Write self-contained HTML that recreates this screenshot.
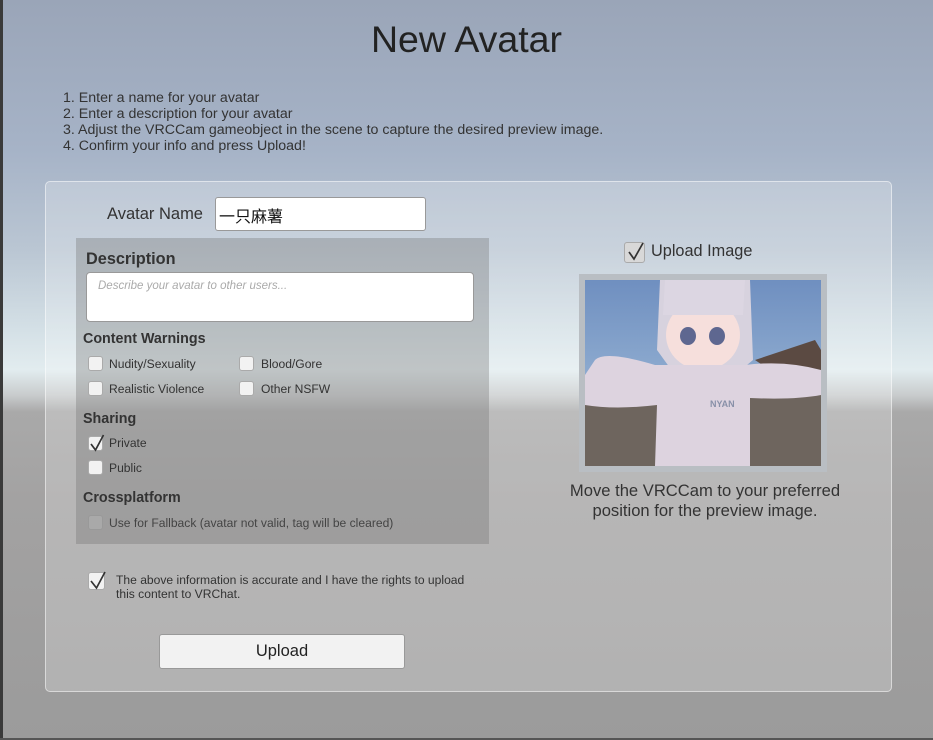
<!DOCTYPE html>
<html><head><meta charset="utf-8"><style>
*{margin:0;padding:0;box-sizing:border-box}
body{width:933px;height:740px;overflow:hidden;position:relative;font-family:"Liberation Sans","Noto Sans CJK SC",sans-serif;
background:linear-gradient(180deg,#9aa5b8 0px,#a6b3c7 150px,#bac6d3 250px,#d4e0e6 330px,#e2ecef 370px,#c9cccd 395px,#a9a9a9 412px,#a3a2a2 500px,#9b9b9b 740px);}
.edge{position:absolute;left:0;top:0;width:3px;height:740px;background:#3a3a3a}
.bot{position:absolute;left:0;bottom:0;width:933px;height:2px;background:#555}
.abs{position:absolute}
h1{position:absolute;left:0;width:933px;text-align:center;top:18px;font-weight:normal;font-size:37.5px;color:#222}
.steps{left:63px;top:90px;font-size:14.2px;color:#333;line-height:16px;white-space:nowrap}
.panel{left:45px;top:181px;width:847px;height:511px;border-radius:5px;border:1px solid rgba(255,255,255,.5);background:rgba(255,255,255,.22)}
.lbl{font-size:16.5px;color:#333}
.inp{background:#fff;border:1px solid #999;border-radius:3px}
.desc{left:76px;top:238px;width:413px;height:306px;background:rgba(110,110,110,.33)}
.cb{position:absolute;width:15px;height:15px;border-radius:3px;background:#f2f2f2;border:1px solid #aaa}
.cb svg{position:absolute;left:0;top:-3px;overflow:visible}
.t{position:absolute;font-size:12.1px;color:#333;white-space:nowrap}
.hd{position:absolute;font-size:14.3px;font-weight:bold;color:#333}
</style></head><body>
<div class="edge"></div><div class="bot"></div>
<h1>New Avatar</h1>
<div class="abs steps">1. Enter a name for your avatar<br>2. Enter a description for your avatar<br>3. Adjust the VRCCam gameobject in the scene to capture the desired preview image.<br>4. Confirm your info and press Upload!</div>
<div class="abs panel"></div>
<div class="abs lbl" style="left:107px;top:205px">Avatar Name</div>
<div class="abs inp" style="left:215px;top:197px;width:211px;height:34px;font-size:16px;padding:5px 3px;color:#111">一只麻薯</div>
<div class="abs desc"></div>
<div class="hd" style="left:86px;top:250px;font-size:16.3px">Description</div>
<div class="abs inp" style="left:86px;top:272px;width:388px;height:50px;border-radius:4px;font-size:11.5px;font-style:italic;color:#aaa;padding:7px 11px">Describe your avatar to other users...</div>
<div class="hd" style="left:83px;top:331px">Content Warnings</div>
<div class="cb" style="left:88px;top:356px"></div><div class="t" style="left:109px;top:357px">Nudity/Sexuality</div>
<div class="cb" style="left:239px;top:356px"></div><div class="t" style="left:261px;top:357px">Blood/Gore</div>
<div class="cb" style="left:88px;top:381px"></div><div class="t" style="left:109px;top:382px">Realistic Violence</div>
<div class="cb" style="left:239px;top:381px"></div><div class="t" style="left:261px;top:382px">Other NSFW</div>
<div class="hd" style="left:83px;top:411px">Sharing</div>
<div class="cb" style="left:88px;top:436px"><svg width="16" height="18" viewBox="0 0 16 18"><path d="M2 10l4.5 6 8-15" stroke="#333" stroke-width="1.7" fill="none"/></svg></div><div class="t" style="left:109px;top:436px">Private</div>
<div class="cb" style="left:88px;top:460px"></div><div class="t" style="left:109px;top:461px">Public</div>
<div class="hd" style="left:83px;top:490px">Crossplatform</div>
<div class="cb" style="left:88px;top:515px;background:#a9a9a9;border-color:#999"></div><div class="t" style="left:109px;top:516px;color:#444">Use for Fallback (avatar not valid, tag will be cleared)</div>
<div class="cb" style="left:88px;top:572px;width:17px;height:18px"><svg width="18" height="20" viewBox="0 0 18 20"><path d="M2 11l5.5 7 8.5-16" stroke="#333" stroke-width="1.7" fill="none"/></svg></div>
<div class="t" style="left:116px;top:573px;line-height:14px">The above information is accurate and I have the rights to upload<br>this content to VRChat.</div>
<div class="abs" style="left:159px;top:634px;width:246px;height:35px;background:#f2f2f2;border:1px solid #999;border-radius:3px;text-align:center;font-size:16.5px;line-height:33px;color:#222">Upload</div>
<div class="cb" style="left:624px;top:242px;width:21px;height:21px;background:#d8d8d8"><svg width="21" height="22" viewBox="0 0 21 22"><path d="M4 12l5 7 9-16" stroke="#333" stroke-width="1.7" fill="none"/></svg></div>
<div class="abs lbl" style="left:651px;top:242px;font-size:16.3px">Upload Image</div>
<div class="abs" style="left:579px;top:274px;width:248px;height:198px;background:#b9bec3"></div>
<svg class="abs" style="left:585px;top:280px" width="236" height="186" viewBox="0 0 236 186">
<defs><linearGradient id="sk" x1="0" y1="0" x2="0" y2="1"><stop offset="0" stop-color="#6f8fc0"/><stop offset="1" stop-color="#a9c4dd"/></linearGradient></defs>
<rect width="236" height="186" fill="url(#sk)"/>
<rect y="110" width="236" height="76" fill="#6e655e"/>
<path d="M170 80 L230 60 L236 70 L236 110 L200 100Z" fill="#5b4a42"/>
<path d="M75 0 L165 0 L168 80 L150 95 L90 95 L72 70Z" fill="#d7d2de"/>
<ellipse cx="118" cy="55" rx="37" ry="35" fill="#f6dfdc"/>
<path d="M80 0 L160 0 L158 35 L78 35Z" fill="#dcd6e2"/>
<ellipse cx="103" cy="56" rx="8" ry="9" fill="#5e6790"/><ellipse cx="132" cy="56" rx="8" ry="9" fill="#5e6790"/>
<path d="M10 80 Q20 70 70 85 L160 85 Q200 80 236 90 L236 115 Q210 120 165 118 L165 186 L70 186 L72 125 Q30 130 0 125 L0 95Z" fill="#ddd3df"/>
<text x="125" y="127" font-family="Liberation Sans" font-size="9" font-weight="bold" fill="#8890a8">NYAN</text>
</svg>
<div class="abs" style="left:520px;top:481px;width:370px;text-align:center;font-size:16.6px;line-height:20px;color:#333">Move the VRCCam to your preferred<br>position for the preview image.</div>
</body></html>
